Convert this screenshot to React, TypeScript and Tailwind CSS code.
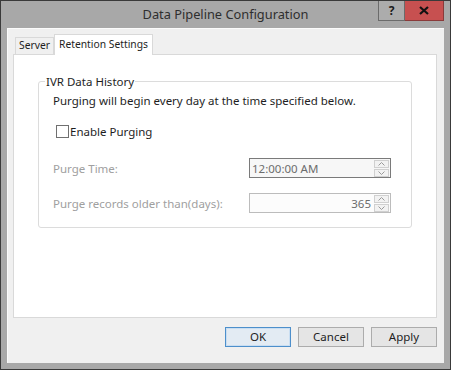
import React from 'react'

const font = { fontFamily: '"Noto Sans", "Open Sans", Arial, sans-serif' }

function Spinner() {
    return (
        <div className="flex flex-col gap-[1px] px-[1px] py-[1px]">
            {['up', 'down'].map((dir) => (
                <div
                    key={dir}
                    className="w-[15px] h-[8px] border border-[#d0d0d0] bg-[#f2f2f2] flex items-center justify-center"
                >
                    <svg width="7" height="4" viewBox="0 0 7 4">
                        <path
                            d={dir === 'up' ? 'M0.5 3.5 L3.5 0.5 L6.5 3.5' : 'M0.5 0.5 L3.5 3.5 L6.5 0.5'}
                            stroke="#9a9a9a"
                            strokeWidth="1"
                            fill="none"
                        />
                    </svg>
                </div>
            ))}
        </div>
    )
}

function DialogButton({ label, primary }: { label: string; primary?: boolean }) {
    return (
        <button
            className={`w-[66px] h-[20px] text-[11.5px] text-[#1e1e1e] border ${
                primary ? 'bg-[#e3ebf3] border-[#4d8fcb] shadow-[inset_0_0_0_1px_#c9def2]' : 'bg-[#e5e5e5] border-[#acacac]'
            } flex items-center justify-center`}
        >
            {label}
        </button>
    )
}

export default function App() {
    return (
        <div
            className="w-[451px] h-[370px] bg-[#a8a8a8] border border-[#3a3a3a] flex flex-col"
            style={font}
        >
            {/* Title bar */}
            <div className="relative h-[27px] shrink-0 flex items-start justify-end pr-[6px]">
                <div className="absolute inset-x-0 top-[4px] text-center text-[12.8px] text-[#2e2e2e]">
                    Data Pipeline Configuration
                </div>
                <div className="relative w-[27px] h-[20px] bg-[#acacac] border border-[#6b6b6b] border-t-0 flex items-center justify-center text-[12px] font-bold text-[#1a1a1a]">
                    ?
                </div>
                <div className="relative w-[39px] h-[20px] bg-[#c75050] border border-[#8a3a3a] border-t-0 border-l-0 flex items-center justify-center">
                    <svg width="10" height="9" viewBox="0 0 10 9">
                        <path d="M1 1 L9 8 M9 1 L1 8" stroke="#111" strokeWidth="2.2" />
                    </svg>
                </div>
            </div>

            {/* Client area */}
            <div className="flex-1 mx-[6px] mb-[6px] bg-[#f0f0f0] border-t border-l border-[#fbfbfb] flex flex-col pl-[5px] pt-[5px] text-[11.5px]">
                {/* Tabs */}
                <div className="flex items-end h-[20px] pl-[2px] text-[10.3px]">
                    <div className="h-[17px] px-[3px] border border-b-0 border-[#d9d9d9] bg-[#f0f0f0] text-[#1e1e1e] flex items-center">
                        Server
                    </div>
                    <div className="relative h-[21px] top-[1px] px-[4px] border border-b-0 border-[#d9d9d9] bg-white text-[#1e1e1e] flex items-start pt-[2px]">
                        Retention Settings
                    </div>
                </div>

                {/* Tab panel */}
                <div className="w-[424px] h-[264px] bg-white border border-[#d9d9d9] pt-[26px] pl-[24px]">
                    <div className="relative w-[374px] h-[147px] border border-[#dcdcdc] rounded-[3px] pt-[11px] pl-[14px]">
                        <div className="absolute -top-[9px] left-[6px] bg-white px-[1px] text-[#1e1e1e]">
                            IVR Data History
                        </div>
                        <div className="text-[#1e1e1e] leading-[16px]">
                            Purging will begin every day at the time specified below.
                        </div>
                        <div className="flex items-center mt-[14px] ml-[3px] gap-[1px]">
                            <div className="w-[13px] h-[13px] border border-[#707070] bg-white" />
                            <span className="text-[#1e1e1e]">Enable Purging</span>
                        </div>

                        <div className="flex items-center justify-between mt-[18px] pr-[20px]">
                            <span className="text-[#a0a0a0]">Purge Time:</span>
                            <div className="w-[142px] h-[20px] border border-[#7a7a7a] bg-[#f7f7f7] flex items-center">
                                <span className="flex-1 pl-[2px] text-[#6d6d6d]">12:00:00 AM</span>
                                <Spinner />
                            </div>
                        </div>

                        <div className="flex items-center justify-between mt-[15px] pr-[20px]">
                            <span className="text-[#a0a0a0]">Purge records older than(days):</span>
                            <div className="w-[142px] h-[20px] border border-[#bcbcbc] bg-[#fcfcfc] flex items-center">
                                <span className="flex-1 pr-[2px] text-right text-[#6d6d6d]">365</span>
                                <Spinner />
                            </div>
                        </div>
                    </div>
                </div>

                {/* Buttons */}
                <div className="flex justify-end gap-[7px] mt-[9px] w-[424px]">
                    <DialogButton label="OK" primary />
                    <DialogButton label="Cancel" />
                    <DialogButton label="Apply" />
                </div>
            </div>
        </div>
    )
}
